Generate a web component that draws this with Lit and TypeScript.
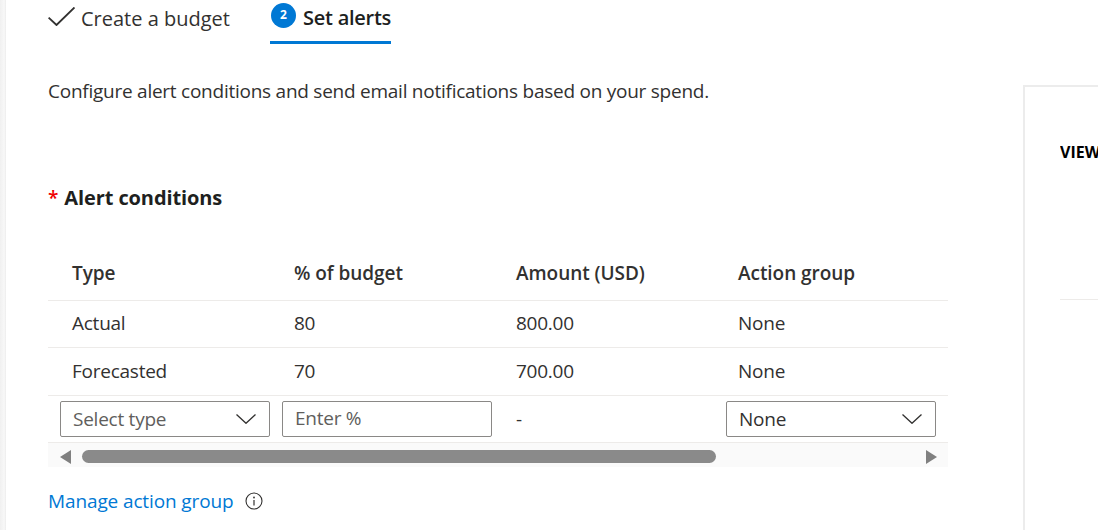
import { LitElement, html, css } from "lit";
import { customElement } from "lit/decorators.js";

const chevron = html`<svg class="chev" viewBox="0 0 20 10" width="20" height="10"><path d="M.5.5 10 9.3 19.5.5" fill="none" stroke="#323130" stroke-width="1.3"/></svg>`;

@customElement("app-root")
export class AppRoot extends LitElement {
  static styles = css`
    :host { display: block; width: 1098px; height: 530px; overflow: hidden; background: #fff; color: #323130;
      font-family: "Open Sans", "Noto Sans", sans-serif; font-size: 19px; letter-spacing: -0.25px; }
    * { box-sizing: border-box; }
    .page { display: flex; height: 530px; }
    .edge { width: 6px; flex: none; background: linear-gradient(90deg, #f0f0f0, #f8f8f8 70%, #ececec); }
    .main { width: 1017px; flex: none; padding-left: 42px; }
    .tabs { display: flex; height: 44px; font-size: 20px; letter-spacing: 0; }
    .tab { display: flex; align-items: center; height: 44px; padding-bottom: 6px; white-space: nowrap; line-height: 26px; }
    .tab.done { width: 222px; }
    .check { margin: 0 6px 6px 0; }
    .tab.active { font-weight: 600; width: 121px; border-bottom: 3px solid #0078d4; padding-bottom: 6px; color: #201f1e; letter-spacing: -0.25px; }
    .badge { width: 25px; height: 25px; border-radius: 50%; background: #0078d4; color: #fff; font-size: 12px; font-weight: 700; letter-spacing: 0;
      display: flex; align-items: center; justify-content: center; margin: 0 7px 5px 1px; flex: none; }
    .desc { margin: 33px 0 0; line-height: 28px; height: 28px; white-space: nowrap; }
    .title { margin: 73px 0 0; height: 40px; line-height: 40px; font-size: 20px; font-weight: 700; color: #201f1e; display: flex; letter-spacing: -0.1px; }
    .req { color: #f00000; margin-right: 6px; font-size: 19px; font-weight: 600; }
    .table { margin-top: 36px; width: 900px; }
    .row { display: grid; grid-template-columns: repeat(4, 222px); padding-left: 12px; border-bottom: 1px solid #edebe9; height: 47px; align-items: center; }
    .row.tall { height: 48px; }
    .row.text { padding-bottom: 2px; }
    .row.head { padding-bottom: 8px; font-weight: 600; color: #323130; letter-spacing: -0.05px; }
    .cell { padding-left: 12px; white-space: nowrap; }
    .ctl { width: 210px; height: 36px; border: 1px solid #8a8886; border-radius: 2px; display: flex; align-items: center; justify-content: space-between;
      padding: 0 13px 0 12px; line-height: 34px; }
    .ph { color: #605e5c; }
    .ph.up { margin-top: -2px; }
    .scroll { display: flex; align-items: center; height: 24px; padding-top: 3px; background: #fafafa; }
    .arrow { width: 0; height: 0; border-top: 7px solid transparent; border-bottom: 7px solid transparent; }
    .arrow.l { border-right: 11px solid #808080; margin-left: 12px; }
    .arrow.r { border-left: 11px solid #808080; margin-left: 210px; }
    .thumb { width: 634px; height: 13px; border-radius: 7px; background: #8a8a8a; margin-left: 11px; }
    .links { display: flex; align-items: center; margin-top: 20px; height: 28px; }
    .link { color: #0078d4; line-height: 28px; white-space: nowrap; letter-spacing: -0.12px; }
    .info { margin-left: 11px; }
    .side { flex: 1; margin-top: 85px; border: 2px solid #ececec; border-width: 2px 0 0 2px; padding-left: 35px; }
    .view { margin-top: 54px; font-size: 16px; font-weight: 700; color: #000; line-height: 22px; height: 159px; border-bottom: 1px solid #edebe9; white-space: nowrap; overflow: hidden; letter-spacing: 0; }
  `;

  render() {
    const rows = [["Actual", "80", "800.00", "None"], ["Forecasted", "70", "700.00", "None"]];
    return html`<div class="page">
      <div class="edge"></div>
      <div class="main">
        <div class="tabs">
          <div class="tab done">
            <svg class="check" viewBox="0 0 27 19" width="27" height="19"><path d="M.6 10.6 8.5 18 26.5.5" fill="none" stroke="#323130" stroke-width="1.9"/></svg>
            <span>Create a budget</span>
          </div>
          <div class="tab active"><span class="badge">2</span><span>Set alerts</span></div>
        </div>
        <p class="desc">Configure alert conditions and send email notifications based on your spend.</p>
        <div class="title"><span class="req">*</span><span>Alert conditions</span></div>
        <div class="table">
          <div class="row head">
            <div class="cell">Type</div><div class="cell">% of budget</div><div class="cell">Amount (USD)</div><div class="cell">Action group</div>
          </div>
          ${rows.map((r, i) => html`<div class="row text ${i === 1 ? "tall" : ""}">${r.map((c) => html`<div class="cell">${c}</div>`)}</div>`)}
          <div class="row">
            <div class="ctl"><span class="ph">Select type</span>${chevron}</div>
            <div class="ctl"><span class="ph up">Enter %</span></div>
            <div class="cell">-</div>
            <div class="ctl"><span>None</span>${chevron}</div>
          </div>
          <div class="scroll"><span class="arrow l"></span><span class="thumb"></span><span class="arrow r"></span></div>
        </div>
        <div class="links">
          <span class="link">Manage action group</span>
          <svg class="info" viewBox="0 0 18 18" width="18" height="18"><circle cx="9" cy="9" r="8" fill="none" stroke="#323130" stroke-width="1.1"/><path d="M9 8v5.5" stroke="#323130" stroke-width="1.2"/><circle cx="9" cy="5.5" r=".9" fill="#323130"/></svg>
        </div>
      </div>
      <div class="side"><div class="view">VIEW</div></div>
    </div>`;
  }
}
